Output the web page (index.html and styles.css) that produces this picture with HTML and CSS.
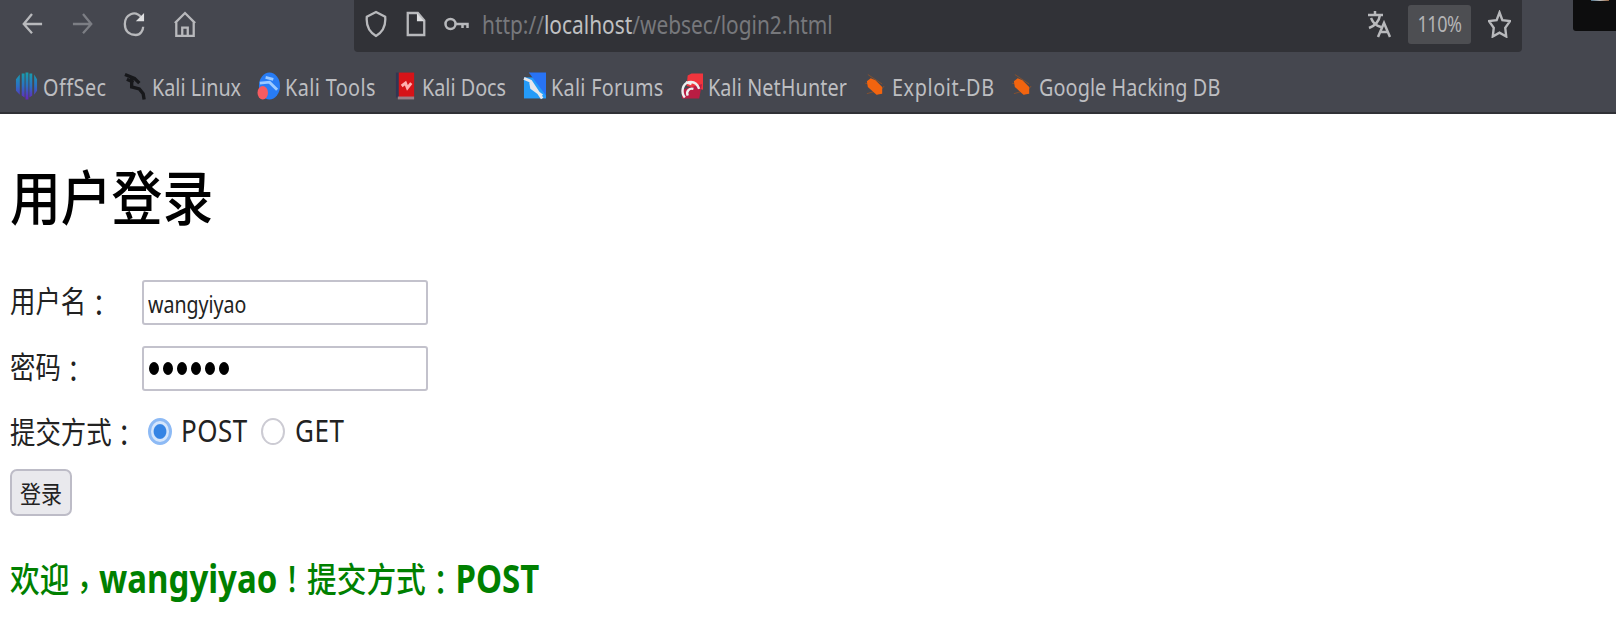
FILE: index.html
```
<!DOCTYPE html>
<html lang="zh-CN">
<head>
    <meta charset="UTF-8">
    <title>用户登录</title>
    <link rel="stylesheet" href="styles.css">
</head>
<body>
    <header class="browser">
        <div class="toolbar">
            <nav class="nav-buttons">
                <svg class="icon" viewBox="0 0 24 28"><path d="M23 14H3M12 3L3 14l9 10"/></svg>
                <svg class="icon dim" viewBox="0 0 24 28"><path d="M1 14h20M12 3l9 11-9 10"/></svg>
                <svg class="icon" viewBox="0 0 24 28"><path d="M20 7C13-2 2 4 2 14s7 12 12 12 8-5 8-9"/><path class="solid" d="M23 2v9h-9z"/></svg>
                <svg class="icon" viewBox="0 0 24 28"><path d="M1 13L12 2l11 11M2.500 11v16h19V11M9 27v-9h6v9"/></svg>
            </nav>
            <div class="address">
                <svg class="icon shield" viewBox="0 0 24 28"><path d="M12 1L22 6c1 10-3 17-10 21C5 23 1 16 2 6z"/></svg>
                <svg class="icon page" viewBox="0 0 24 28"><path d="M3 2h11l7 8v16H3z"/><path class="solid" d="M13 2v9h8z"/></svg>
                <svg class="icon key" viewBox="0 0 24 28"><circle cx="6" cy="14" r="5"/><path d="M11 14h12v4M18 14v4"/></svg>
                <span class="url stretch">http://<b>localhost</b>/websec/login2.html</span>
                <svg class="icon translate" viewBox="0 0 24 28"><path d="M1 5h15M8 1v4M13 5C12 12 7 16 2 18M4 8c2 5 6 8 10 9M11 27l6-14 6 14M13 22h8"/></svg>
                <span class="zoom"><span class="stretch">110%</span></span>
                <svg class="icon star" viewBox="0 0 24 28"><path d="M12 2l3 8 8 1-5 7 1 9-7-4-7 4 1-9-5-7 8-1z"/></svg>
            </div>
            <div class="corner"><i></i></div>
        </div>
        <div class="bookmarks">
            <a class="offsec"><svg viewBox="0 0 24 28"><defs><linearGradient id="sec" x2="0" y2="1"><stop stop-color="#16a0ad"/><stop offset=".5" stop-color="#2b70c4"/><stop offset="1" stop-color="#6823bd"/></linearGradient></defs><path fill="url(#sec)" d="M1 7l4-5v21l-4-4zM7 1h3v25l-3-2zM11 0h3v28h-3zM15 1h3v23l-3 2zM20 2l3 5v12l-3 4z"/></svg><span class="stretch">OffSec</span></a>
            <a class="linux"><svg viewBox="0 0 24 28"><path d="M1 2l10 4 5 5M3 7l7 3M8 5v10l8 2 4 5 1 6" fill="none" stroke="#17181b" stroke-width="3.500"/></svg><span class="stretch">Kali Linux</span></a>
            <a class="tools"><svg viewBox="0 0 24 28"><ellipse cx="13" cy="14" rx="11" ry="14" fill="#277cf5"/><path d="M3 11l10-1 8 8M9 5l8 2" fill="none" stroke="#9ccaff" stroke-width="3"/><ellipse cx="6" cy="21" rx="5.500" ry="7" fill="#f65b61"/></svg><span class="stretch">Kali Tools</span></a>
            <a class="docs"><svg viewBox="0 0 24 28"><path fill="#313653" d="M2 0h3v26H2z"/><path fill="#d61318" d="M5 0h16v26H5z"/><path fill="#9b7f87" d="M4 25h17v3H4z"/><path d="M8 14l4-3 2 5 4-5" fill="none" stroke="#ffb0b0" stroke-width="3"/></svg><span class="stretch">Kali Docs</span></a>
            <a class="forums"><svg viewBox="0 0 24 28"><path fill="#249bf9" d="M1 5h23v22H1z"/><path fill="#2873f5" d="M6 0h18v24z"/><path d="M1 6l7 3 12 18M8 10l1 6 11 8" fill="none" stroke="#e5e7ec" stroke-width="3"/></svg><span class="stretch">Kali Forums</span></a>
            <a class="hunter"><svg viewBox="0 0 24 28"><path fill="#f1353d" d="M8 3l4-2h12v17L7 14z"/><path fill="#b91d43" d="M2 18l21-6-3 15H2z"/><path d="M20 17c-2-6-6-8-11-7-7 2-8 11-4 16M8 24c-2-5 2-8 6-7M6 10l6 2" fill="none" stroke="#eee" stroke-width="2.500"/></svg><span class="stretch">Kali NetHunter</span></a>
            <a class="exploit"><svg viewBox="0 0 24 28"><path d="M4 2l15 10M1 11l8 2M3 22l7-2M14 23l7-9" stroke="#85502f"/><path fill="#f2640f" d="M3 9l4-3 5 2 7 7v7l-6 1-9-8z"/></svg><span class="stretch">Exploit-DB</span></a>
            <a class="google"><svg viewBox="0 0 24 28"><path d="M4 2l15 10M1 11l8 2M3 22l7-2M14 23l7-9" stroke="#85502f"/><path fill="#f2640f" d="M3 9l4-3 5 2 7 7v7l-6 1-9-8z"/></svg><span class="stretch">Google Hacking DB</span></a>
        </div>
    </header>

    <main>
        <h1><span class="cjk">用户登录</span></h1>
        <form>
            <div class="row">
                <label class="cjk">用户名<span class="mark" lang="zh-TW">：</span></label>
                <div class="field"><span class="stretch">wangyiyao</span></div>
            </div>
            <div class="row">
                <label class="cjk">密码<span class="mark" lang="zh-TW">：</span></label>
                <div class="field dots"><i></i><i></i><i></i><i></i><i></i><i></i></div>
            </div>
            <div class="row methods">
                <label class="cjk">提交方式<span class="mark" lang="zh-TW">：</span></label>
                <span class="radio checked"></span>
                <span class="stretch post">POST</span>
                <span class="radio"></span>
                <span class="stretch get">GET</span>
            </div>
            <button type="button"><span class="cjk">登录</span></button>
        </form>
        <h3><span class="cjk">欢迎<span class="mark comma" lang="zh-TW">，</span></span><span class="stretch name">wangyiyao</span><span class="cjk"><span class="mark bang" lang="zh-TW">！</span>提交方式<span class="mark" lang="zh-TW">：</span></span><span class="stretch">POST</span></h3>
    </main>
</body>
</html>
```
FILE: styles.css
```
* {
    margin: 0;
    padding: 0;
    box-sizing: border-box;
}

body {
    height: 631px;
    overflow: hidden;
    background: #fff;
    color: #222;
    font-family: "Noto Sans", "Noto Sans CJK SC", sans-serif;
}

/* tall, narrow lettering */
.stretch {
    display: inline-block;
    white-space: nowrap;
    transform: scaleY(1.2);
}

.cjk {
    display: inline-block;
    white-space: nowrap;
    font-family: "Noto Sans CJK SC", sans-serif;
    transform: scaleY(1.16);
}

/* centred full-width punctuation */
.mark {
    font-family: "Noto Sans CJK TC", sans-serif;
    line-height: 0;
    vertical-align: -3px;
}

.mark.comma {
    vertical-align: -7px;
}

.mark.bang {
    vertical-align: baseline;
}

.browser {
    height: 114px;
    background: #45474f;
    border-bottom: 2px solid #303136;
}

.toolbar {
    display: flex;
    height: 52px;
}

.nav-buttons {
    display: flex;
    width: 354px;
    height: 48px;
    padding-left: 21px;
    gap: 29px;
    align-items: center;
}

.icon {
    flex: none;
    width: 22px;
    height: 28px;
    fill: none;
    stroke: #b8b9bc;
    stroke-width: 2.5;
}

.icon.dim {
    stroke: #7c7e84;
}

.icon .solid {
    fill: #dedfe1;
    stroke: none;
}

.address {
    display: flex;
    width: 1168px;
    height: 52px;
    padding: 0 11px 4px 11px;
    align-items: center;
    background: #313237;
    border-radius: 0 0 4px 4px;
}

.page {
    margin-left: 18px;
}

.key {
    width: 25px;
    margin-left: 17px;
}

.url {
    margin-left: 13px;
    font-size: 20.9px;
    color: #77787c;
}

.url b {
    font-weight: 400;
    color: #c0c1c3;
}

.translate {
    width: 24px;
    margin-left: auto;
}

.zoom {
    display: flex;
    width: 63px;
    height: 39px;
    margin: 0 17px 0 17px;
    align-items: center;
    justify-content: center;
    background: #4d4e52;
    border-radius: 3px;
    font-size: 18px;
    letter-spacing: -0.5px;
    color: #b4b4b6;
}

.star {
    width: 23px;
}

.corner {
    width: 43px;
    height: 31px;
    margin-left: auto;
    padding-left: 18px;
    background: #0d0d0e;
    border-radius: 0 0 0 3px;
}

.corner i {
    display: block;
    width: 18px;
    height: 1px;
    background: linear-gradient(90deg, #50738a, #bbb, #92613d);
}

.bookmarks {
    display: flex;
    height: 60px;
    padding: 8px 0 0 15px;
    align-items: center;
    font-size: 19.8px;
    color: #bdbec1;
}

.bookmarks a {
    display: flex;
    align-items: center;
}

.bookmarks svg {
    flex: none;
    width: 23px;
    height: 28px;
    margin-right: 5px;
}

.offsec {
    width: 109px;
    letter-spacing: 0.5px;
}

.linux {
    width: 133px;
}

.tools {
    width: 137px;
    letter-spacing: 0.4px;
}

.docs {
    width: 129px;
}

.forums {
    width: 157px;
    letter-spacing: 0.3px;
}

.hunter {
    width: 184px;
    letter-spacing: 0.1px;
}

.exploit {
    width: 147px;
    letter-spacing: 0.6px;
}

.google {
    letter-spacing: 0.1px;
}

main {
    padding: 42px 0 0 10px;
}

h1 {
    height: 76px;
    line-height: 76px;
    font-size: 50.8px;
    font-weight: 500;
    color: #000;
}

form {
    padding-top: 48px;
}

.row {
    display: flex;
    height: 45px;
    margin-bottom: 21px;
    align-items: center;
    font-size: 25.4px;
}

.row label {
    width: 132px;
    padding-bottom: 5px;
}

.field {
    display: flex;
    width: 286px;
    height: 45px;
    padding: 3px 0 0 4px;
    align-items: center;
    border: 2px solid #c3c2cc;
    border-radius: 3px;
    font-size: 19.6px;
}

.dots {
    padding: 0 0 0 5px;
    gap: 4px;
}

.dots i {
    width: 10px;
    height: 13px;
    background: #000;
    border-radius: 50%;
}

.methods {
    height: 40px;
    margin-bottom: 17px;
    padding-bottom: 1px;
    font-size: 26px;
}

.methods label {
    width: 138px;
    padding-bottom: 3px;
    font-size: 25.4px;
}

.radio {
    width: 24px;
    height: 27px;
    border: 2px solid #cccbd3;
    border-radius: 50%;
}

.radio.checked {
    border: 3px solid #8dbaf5;
    background: radial-gradient(ellipse, #3584e4 46%, #d5e6fc 54%);
}

.post,
.get {
    padding-bottom: 3px;
    letter-spacing: 0.5px;
}

.post {
    width: 89px;
    padding-left: 9px;
}

.get {
    padding-left: 10px;
}

button {
    display: block;
    width: 62px;
    height: 47px;
    background: #e9e9ed;
    border: 2px solid #bdbcc7;
    border-radius: 7px;
    font-size: 21px;
    color: #222;
}

h3 {
    display: flex;
    height: 60px;
    margin-top: 31px;
    align-items: center;
    font-size: 33px;
    color: #008000;
}

h3 .cjk {
    font-size: 29.7px;
    font-weight: 500;
}
```
